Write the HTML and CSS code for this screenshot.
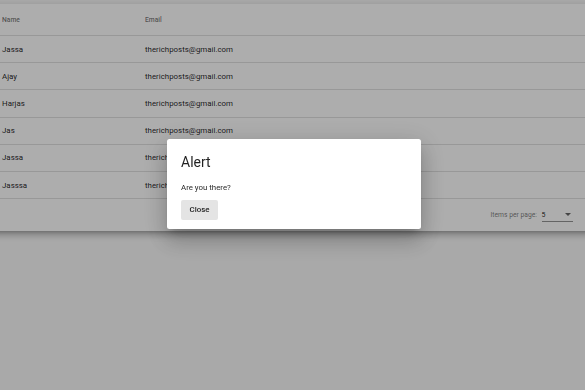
FILE: index.html
```html
<!DOCTYPE html>
<html>
<head>
<meta charset="utf-8">
<link rel="stylesheet" href="styles.css">
</head>
<body>
<div class="page">
  <div class="card">
    <div class="table">
      <div class="row head"><div class="cell first">Name</div><div class="cell">Email</div></div>
      <div class="row"><div class="cell first">Jassa</div><div class="cell">therichposts@gmail.com</div></div>
      <div class="row"><div class="cell first">Ajay</div><div class="cell">therichposts@gmail.com</div></div>
      <div class="row"><div class="cell first">Harjas</div><div class="cell">therichposts@gmail.com</div></div>
      <div class="row"><div class="cell first">Jas</div><div class="cell">therichposts@gmail.com</div></div>
      <div class="row"><div class="cell first">Jassa</div><div class="cell">therichposts@gmail.com</div></div>
      <div class="row"><div class="cell first">Jasssa</div><div class="cell">therichposts@gmail.com</div></div>
    </div>
    <div class="paginator">
      <span class="page-label">Items per page:</span>
      <div class="select"><span class="value">5</span><span class="arrow"></span></div>
    </div>
  </div>
</div>
<div class="backdrop"></div>
<div class="dialog">
  <h2 class="dialog-title">Alert</h2>
  <div class="dialog-content">Are you there?</div>
  <div class="dialog-actions"><button class="btn">Close</button></div>
</div>
</body>
</html>
```

FILE: styles.css
```css
html, body {
  margin: 0;
  height: 100%;
  overflow: hidden;
  background: #fafafa;
  font-family: Roboto, "Liberation Sans", sans-serif;
}

.page {
  padding-top: 4px;
}

.card {
  margin-left: -12px;
  width: calc(100% + 24px);
  background: #fff;
  box-shadow: 0 3px 3px -2px rgba(0,0,0,.2), 0 4.5px 6px 0.5px rgba(0,0,0,.14), 0 2px 8px 1px rgba(0,0,0,.12);
}

.row {
  display: grid;
  grid-template-columns: 157px 1fr;
  align-items: center;
  height: 27.2px;
  box-sizing: border-box;
  border-bottom: 1px solid rgba(0,0,0,.12);
  font-size: 7.9px;
  color: rgba(0,0,0,.87);
}

.row.head {
  height: 32px;
  font-size: 6.75px;
  font-weight: 500;
  color: rgba(0,0,0,.54);
}

.cell.first {
  padding-left: 14px;
}

.paginator {
  display: flex;
  justify-content: flex-end;
  align-items: center;
  height: 31.5px;
  padding-right: 24px;
  font-size: 6.75px;
  color: rgba(0,0,0,.54);
}

.page-label {
  margin-right: 4.5px;
}

.select {
  width: 31.5px;
  display: flex;
  justify-content: space-between;
  align-items: center;
  padding-bottom: 2.5px;
  margin-top: 3px;
  border-bottom: 1px solid rgba(0,0,0,.42);
}

.value {
  color: rgba(0,0,0,.87);
  font-size: 7px;
}

.arrow {
  width: 0;
  height: 0;
  margin-right: 2.5px;
  border-left: 3.2px solid transparent;
  border-right: 3.2px solid transparent;
  border-top: 3.2px solid rgba(0,0,0,.6);
}

.backdrop {
  position: fixed;
  inset: 0;
  background: rgba(0,0,0,.32);
}

.dialog {
  position: fixed;
  left: 167px;
  top: 139px;
  width: 254px;
  box-sizing: border-box;
  padding: 14px 14px 9px;
  background: #fff;
  border-radius: 2.5px;
  box-shadow: 0 6px 8px -4px rgba(0,0,0,.2), 0 13px 21px 2px rgba(0,0,0,.14), 0 5px 26px 4px rgba(0,0,0,.12);
}

.dialog-title {
  margin: 0 0 10.7px;
  font-size: 14px;
  line-height: 18px;
  font-weight: 400;
  color: rgba(0,0,0,.87);
}

.dialog-content {
  font-size: 7.875px;
  line-height: 11.25px;
  color: rgba(0,0,0,.87);
}

.dialog-actions {
  margin-top: 7px;
  display: flex;
}

.btn {
  height: 20px;
  width: 37px;
  padding: 0;
  border: none;
  border-radius: 2px;
  background: #e4e4e4;
  font-family: Roboto, "Liberation Sans", sans-serif;
  font-size: 7.875px;
  font-weight: 500;
  color: rgba(0,0,0,.87);
}
```
